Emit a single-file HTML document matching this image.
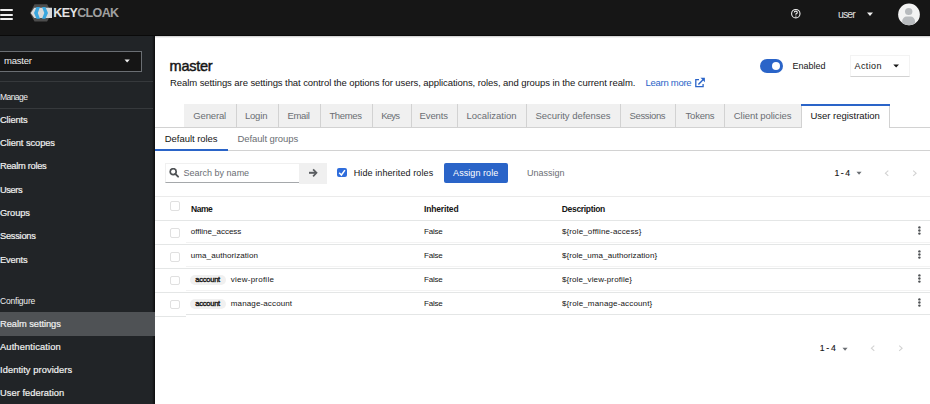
<!DOCTYPE html>
<html><head><meta charset="utf-8"><style>
html,body{margin:0;padding:0;width:930px;height:404px;overflow:hidden;background:#fff;}
body{position:relative;font-family:"Liberation Sans",sans-serif;}
.t{position:absolute;white-space:pre;line-height:1;}
.a{position:absolute;}
</style></head><body>
<!-- header -->
<div class="a" style="left:0;top:0;width:930px;height:35px;background:#161616;"></div>
<div class="a" style="left:0;top:35px;width:930px;height:1px;background:#0a0a0a;"></div>
<div class="a" style="left:155px;top:36px;width:775px;height:1.5px;background:linear-gradient(#c8c8c8,#fff);"></div>
<!-- hamburger -->
<div class="a" style="left:0;top:9px;width:13px;height:2px;background:#f0f0f0;border-radius:1px;"></div>
<div class="a" style="left:0;top:13.5px;width:13px;height:2px;background:#f0f0f0;border-radius:1px;"></div>
<div class="a" style="left:0;top:18px;width:13px;height:2px;background:#f0f0f0;border-radius:1px;"></div>
<!-- logo -->
<svg class="a" style="left:28px;top:2px;" width="100" height="24" viewBox="0 0 100 24">
  <polygon points="6.5,2.2 19.1,2.2 23.8,11 19.1,19.6 6.5,19.6 2,11" fill="#4d4d4d"/>
  <polygon points="2.7,11 6.2,5.8 24,5.8 24,16 6.2,16" fill="#d9d9d9"/>
  <polygon points="8.5,4.9 12,4.9 9.8,11 12,16.7 8.5,16.7 6,11" fill="#3aa6de"/>
  <polygon points="14,4.9 17.4,4.9 20,11 17.4,16.7 14,16.7 16.3,11" fill="#3aa6de"/>
  <text x="25.3" y="15.3" font-family="Liberation Sans" font-weight="bold" font-size="12.5" letter-spacing="-0.62"><tspan fill="#e4e4e4">KEY</tspan><tspan fill="#a0a0a0">CLOAK</tspan></text>
</svg>
<!-- help icon -->
<svg class="a" style="left:789px;top:7px;" width="14" height="14" viewBox="0 0 14 14">
  <circle cx="6.8" cy="6.7" r="4.2" fill="none" stroke="#f0f0f0" stroke-width="1.1"/>
  <path d="M5.3,5.5 Q5.3,4.1 6.8,4.1 Q8.3,4.1 8.3,5.4 Q8.3,6.3 6.9,6.9 L6.9,7.7" fill="none" stroke="#f0f0f0" stroke-width="1.1"/>
  <circle cx="6.9" cy="9.1" r="0.65" fill="#f0f0f0"/>
</svg>
<!-- user caret -->
<svg class="a" style="left:866px;top:12px;" width="8" height="5" viewBox="0 0 8 5"><polygon points="1,0.5 7,0.5 4,4" fill="#f0f0f0"/></svg>
<!-- avatar -->
<svg class="a" style="left:897px;top:3px;" width="24" height="24" viewBox="0 0 24 24">
  <defs><clipPath id="av"><circle cx="12" cy="11.45" r="10.8"/></clipPath></defs>
  <circle cx="12" cy="11.45" r="10.85" fill="#f3f3f3"/>
  <g clip-path="url(#av)">
    <ellipse cx="11.7" cy="8.6" rx="3.7" ry="3.5" fill="#b8bbbe"/>
    <rect x="5.2" y="13.6" width="12.8" height="12" rx="4.5" fill="#b8bbbe"/>
  </g>
</svg>

<!-- sidebar -->
<div class="a" style="left:0;top:36px;width:155px;height:368px;background:#212427;"></div>
<div class="a" style="left:152px;top:36px;width:3px;height:368px;background:linear-gradient(90deg,#212427,#0c0c0d);"></div>
<div class="a" style="left:-1px;top:50.5px;width:141px;height:19.5px;background:#151515;border:1px solid #6a6e73;"></div>
<svg class="a" style="left:124px;top:59px;" width="7" height="4" viewBox="0 0 7 4"><polygon points="0.5,0.4 5.8,0.4 3.15,3.4" fill="#f0f0f0"/></svg>
<div class="a" style="left:0;top:81px;width:153px;height:1px;background:#36393c;"></div>
<div class="a" style="left:0;top:107.5px;width:153px;height:1px;background:#36393c;"></div>
<div class="a" style="left:0;top:312px;width:155px;height:24px;background:#4f5255;"></div>

<!-- main: toggle -->
<div class="a" style="left:759.5px;top:59px;width:23.5px;height:14px;border-radius:7px;background:#2a64c8;"></div>
<div class="a" style="left:771.8px;top:62px;width:8.2px;height:8.2px;border-radius:50%;background:#fff;"></div>
<!-- action -->
<div class="a" style="left:850px;top:55.3px;width:57.6px;height:19.3px;border:1px solid #f3f3f3;border-bottom:1px solid #d2d2d2;"></div>
<svg class="a" style="left:893px;top:63.5px;" width="7" height="4" viewBox="0 0 7 4"><polygon points="0.3,0.4 6,0.4 3.15,3.6" fill="#151515"/></svg>
<!-- external link icon -->
<svg class="a" style="left:694px;top:77px;" width="12" height="11" viewBox="0 0 12 11">
  <path d="M5,2.7 H1.8 V9.7 H9.1 V7" fill="none" stroke="#2a64c8" stroke-width="1.3"/>
  <path d="M4.4,7.4 L9,2.8" fill="none" stroke="#2a64c8" stroke-width="1.4"/>
  <polygon points="6.5,0.8 10.9,0.8 10.9,5.2" fill="#2a64c8"/>
</svg>

<!-- tabs -->
<div class="a" style="left:184px;top:104px;width:617px;height:23px;background:#f0f0f0;"></div>
<div class="a" style="left:155px;top:127px;width:775px;height:1px;background:#d2d2d2;"></div>
<div class="a" style="left:235.5px;top:104px;width:1px;height:23px;background:#d2d2d2;"></div>
<div class="a" style="left:277.5px;top:104px;width:1px;height:23px;background:#d2d2d2;"></div>
<div class="a" style="left:319.5px;top:104px;width:1px;height:23px;background:#d2d2d2;"></div>
<div class="a" style="left:371.5px;top:104px;width:1px;height:23px;background:#d2d2d2;"></div>
<div class="a" style="left:410.5px;top:104px;width:1px;height:23px;background:#d2d2d2;"></div>
<div class="a" style="left:457px;top:104px;width:1px;height:23px;background:#d2d2d2;"></div>
<div class="a" style="left:526px;top:104px;width:1px;height:23px;background:#d2d2d2;"></div>
<div class="a" style="left:620.3px;top:104px;width:1px;height:23px;background:#d2d2d2;"></div>
<div class="a" style="left:675.3px;top:104px;width:1px;height:23px;background:#d2d2d2;"></div>
<div class="a" style="left:723.5px;top:104px;width:1px;height:23px;background:#d2d2d2;"></div>
<div class="a" style="left:800.5px;top:104px;width:89px;height:24px;background:#fff;border-left:1px solid #d2d2d2;border-right:1px solid #d2d2d2;box-sizing:border-box;"></div>
<div class="a" style="left:801px;top:104px;width:88.5px;height:2px;background:#2a64c8;"></div>
<!-- subtabs -->
<div class="a" style="left:155px;top:150px;width:775px;height:1px;background:#d2d2d2;"></div>
<div class="a" style="left:155px;top:149px;width:72.5px;height:2px;background:#2a64c8;"></div>

<!-- toolbar -->
<div class="a" style="left:164.7px;top:163.3px;width:134.3px;height:20px;border-top:1px solid #f0f0f0;border-left:1px solid #f0f0f0;border-bottom:1px solid #a5a8ab;box-sizing:border-box;"></div>
<svg class="a" style="left:169px;top:168px;" width="11" height="11" viewBox="0 0 11 11">
  <circle cx="4.2" cy="3.7" r="3.0" fill="none" stroke="#4f5255" stroke-width="1.7"/>
  <path d="M6.3,5.9 L9.1,8.7" stroke="#4f5255" stroke-width="1.9" stroke-linecap="round"/>
</svg>
<div class="a" style="left:299px;top:163.3px;width:28px;height:20.5px;background:#f0f0f0;"></div>
<svg class="a" style="left:308px;top:168px;" width="11" height="10" viewBox="0 0 11 10">
  <path d="M1,4.8 H8" fill="none" stroke="#5a5d61" stroke-width="2"/><path d="M5.1,1.3 L8.5,4.8 L5.1,8.3" fill="none" stroke="#5a5d61" stroke-width="1.7"/>
</svg>
<div class="a" style="left:337.2px;top:167.8px;width:9.6px;height:9.1px;border-radius:2px;background:#2f6ddc;"></div>
<svg class="a" style="left:337px;top:168px;" width="10" height="10" viewBox="0 0 10 10"><path d="M2.2,4.8 L4.4,7 L7.9,2.1" fill="none" stroke="#fff" stroke-width="1.5"/></svg>
<div class="a" style="left:444px;top:163px;width:64px;height:20.2px;border-radius:2px;background:#2a64c8;"></div>
<!-- pagination top -->
<svg class="a" style="left:856px;top:171px;" width="7" height="5" viewBox="0 0 7 5"><polygon points="0.5,0.8 5.6,0.8 3.05,3.8" fill="#6a6e73"/></svg>
<svg class="a" style="left:884px;top:170px;" width="6" height="7" viewBox="0 0 6 7"><path d="M4.3,0.6 L1.4,3.2 L4.3,5.8" fill="none" stroke="#d2d2d2" stroke-width="1.1"/></svg>
<svg class="a" style="left:912px;top:170px;" width="6" height="7" viewBox="0 0 6 7"><path d="M1.2,0.6 L4.1,3.2 L1.2,5.8" fill="none" stroke="#d2d2d2" stroke-width="1.1"/></svg>
<!-- pagination bottom -->
<svg class="a" style="left:842px;top:346.5px;" width="7" height="5" viewBox="0 0 7 5"><polygon points="0.5,0.8 5.6,0.8 3.05,3.8" fill="#6a6e73"/></svg>
<svg class="a" style="left:870px;top:345px;" width="6" height="7" viewBox="0 0 6 7"><path d="M4.3,0.6 L1.4,3.2 L4.3,5.8" fill="none" stroke="#d2d2d2" stroke-width="1.1"/></svg>
<svg class="a" style="left:898px;top:345px;" width="6" height="7" viewBox="0 0 6 7"><path d="M1.2,0.6 L4.1,3.2 L1.2,5.8" fill="none" stroke="#d2d2d2" stroke-width="1.1"/></svg>

<!-- table -->
<div class="a" style="left:155px;top:195.5px;width:775px;height:1.5px;background:#ebebeb;"></div>
<div class="a" style="left:170px;top:201px;width:9.5px;height:9.5px;border:1px solid #e0e0e0;border-radius:2px;box-sizing:border-box;"></div>
<div class="a" style="left:155px;top:220px;width:775px;height:1px;background:#e4e6e6;"></div>
<!-- row lines -->
<div class="a" style="left:186px;top:242px;width:744px;height:1px;background:#f3f3f3;"></div>
<div class="a" style="left:155px;top:244px;width:775px;height:1px;background:#e4e6e6;"></div>
<div class="a" style="left:186px;top:266px;width:744px;height:1px;background:#f3f3f3;"></div>
<div class="a" style="left:155px;top:268px;width:775px;height:1px;background:#e4e6e6;"></div>
<div class="a" style="left:186px;top:290px;width:744px;height:1px;background:#f3f3f3;"></div>
<div class="a" style="left:155px;top:292px;width:775px;height:1px;background:#e4e6e6;"></div>
<div class="a" style="left:186px;top:314px;width:744px;height:1px;background:#e4e6e6;"></div>
<div class="a" style="left:155px;top:316px;width:31px;height:1px;background:#e4e6e6;"></div>
<!-- row checkboxes -->
<div class="a" style="left:170px;top:228px;width:9.5px;height:9.5px;border:1px solid #e0e0e0;border-radius:2px;box-sizing:border-box;"></div>
<div class="a" style="left:170px;top:252px;width:9.5px;height:9.5px;border:1px solid #e0e0e0;border-radius:2px;box-sizing:border-box;"></div>
<div class="a" style="left:170px;top:275.5px;width:9.5px;height:9.5px;border:1px solid #e0e0e0;border-radius:2px;box-sizing:border-box;"></div>
<div class="a" style="left:170px;top:299.5px;width:9.5px;height:9.5px;border:1px solid #e0e0e0;border-radius:2px;box-sizing:border-box;"></div>
<!-- labels -->
<div class="a" style="left:190.4px;top:274.7px;width:35.6px;height:10px;border-radius:5px;background:#f0f0f0;"></div>
<div class="a" style="left:190.4px;top:298.6px;width:35.6px;height:10px;border-radius:5px;background:#f0f0f0;"></div>
<!-- kebabs -->
<svg class="a" style="left:917px;top:225.5px;" width="5" height="10" viewBox="0 0 5 10"><circle cx="2.4" cy="1.4" r="1.2" fill="#4f5255"/><circle cx="2.4" cy="4.5" r="1.2" fill="#4f5255"/><circle cx="2.4" cy="7.6" r="1.2" fill="#4f5255"/></svg>
<svg class="a" style="left:917px;top:249.5px;" width="5" height="10" viewBox="0 0 5 10"><circle cx="2.4" cy="1.4" r="1.2" fill="#4f5255"/><circle cx="2.4" cy="4.5" r="1.2" fill="#4f5255"/><circle cx="2.4" cy="7.6" r="1.2" fill="#4f5255"/></svg>
<svg class="a" style="left:917px;top:273.5px;" width="5" height="10" viewBox="0 0 5 10"><circle cx="2.4" cy="1.4" r="1.2" fill="#4f5255"/><circle cx="2.4" cy="4.5" r="1.2" fill="#4f5255"/><circle cx="2.4" cy="7.6" r="1.2" fill="#4f5255"/></svg>
<svg class="a" style="left:917px;top:297.5px;" width="5" height="10" viewBox="0 0 5 10"><circle cx="2.4" cy="1.4" r="1.2" fill="#4f5255"/><circle cx="2.4" cy="4.5" r="1.2" fill="#4f5255"/><circle cx="2.4" cy="7.6" r="1.2" fill="#4f5255"/></svg>

<span class="t" style="left:838.00px;top:9px;font-size:10.5px;color:#e0e0e0;letter-spacing:-0.867px;">user</span>
<span class="t" style="left:4.10px;top:56px;font-size:9.5px;color:#f0f0f0;letter-spacing:-0.240px;">master</span>
<span class="t" style="left:0.00px;top:93px;font-size:8.5px;color:#f0f0f0;letter-spacing:-0.560px;">Manage</span>
<span class="t" style="left:0.00px;top:116px;font-size:9.3px;color:#f0f0f0;letter-spacing:-0.117px;-webkit-text-stroke:0.2px #f0f0f0;">Clients</span>
<span class="t" style="left:0.00px;top:139px;font-size:9.3px;color:#f0f0f0;letter-spacing:-0.067px;-webkit-text-stroke:0.2px #f0f0f0;">Client scopes</span>
<span class="t" style="left:0.00px;top:162px;font-size:9.3px;color:#f0f0f0;letter-spacing:-0.290px;-webkit-text-stroke:0.2px #f0f0f0;">Realm roles</span>
<span class="t" style="left:0.00px;top:186px;font-size:9.3px;color:#f0f0f0;letter-spacing:-0.400px;-webkit-text-stroke:0.2px #f0f0f0;">Users</span>
<span class="t" style="left:0.00px;top:209px;font-size:9.3px;color:#f0f0f0;letter-spacing:-0.120px;-webkit-text-stroke:0.2px #f0f0f0;">Groups</span>
<span class="t" style="left:0.00px;top:232px;font-size:9.3px;color:#f0f0f0;letter-spacing:-0.271px;-webkit-text-stroke:0.2px #f0f0f0;">Sessions</span>
<span class="t" style="left:0.00px;top:256px;font-size:9.3px;color:#f0f0f0;letter-spacing:-0.160px;-webkit-text-stroke:0.2px #f0f0f0;">Events</span>
<span class="t" style="left:0.00px;top:297px;font-size:8.5px;color:#f0f0f0;letter-spacing:-0.200px;">Configure</span>
<span class="t" style="left:0.00px;top:320px;font-size:9.3px;color:#f0f0f0;letter-spacing:-0.046px;-webkit-text-stroke:0.2px #f0f0f0;">Realm settings</span>
<span class="t" style="left:0.00px;top:343px;font-size:9.3px;color:#f0f0f0;letter-spacing:0.138px;-webkit-text-stroke:0.2px #f0f0f0;">Authentication</span>
<span class="t" style="left:0.00px;top:366px;font-size:9.3px;color:#f0f0f0;letter-spacing:0.076px;-webkit-text-stroke:0.2px #f0f0f0;">Identity providers</span>
<span class="t" style="left:0.00px;top:389px;font-size:9.3px;color:#f0f0f0;letter-spacing:0.043px;-webkit-text-stroke:0.2px #f0f0f0;">User federation</span>
<span class="t" style="left:169.60px;top:59px;font-size:14.5px;color:#151515;letter-spacing:-0.260px;-webkit-text-stroke:0.45px #151515;">master</span>
<span class="t" style="left:170.00px;top:78px;font-size:9.5px;color:#151515;letter-spacing:-0.076px;">Realm settings are settings that control the options for users, applications, roles, and groups in the current realm.</span>
<span class="t" style="left:645.50px;top:78px;font-size:9.5px;color:#2a64c8;letter-spacing:-0.278px;">Learn more</span>
<span class="t" style="left:792.60px;top:62px;font-size:9px;color:#151515;letter-spacing:-0.017px;">Enabled</span>
<span class="t" style="left:854.60px;top:62px;font-size:9px;color:#151515;letter-spacing:0.360px;">Action</span>
<span class="t" style="left:193.30px;top:111px;font-size:9.5px;color:#6a6e73;letter-spacing:-0.150px;">General</span>
<span class="t" style="left:244.90px;top:111px;font-size:9.5px;color:#6a6e73;letter-spacing:-0.175px;">Login</span>
<span class="t" style="left:287.50px;top:111px;font-size:9.5px;color:#6a6e73;letter-spacing:-0.375px;">Email</span>
<span class="t" style="left:329.40px;top:111px;font-size:9.5px;color:#6a6e73;letter-spacing:-0.340px;">Themes</span>
<span class="t" style="left:381.20px;top:111px;font-size:9.5px;color:#6a6e73;letter-spacing:-0.733px;">Keys</span>
<span class="t" style="left:419.50px;top:111px;font-size:9.5px;color:#6a6e73;letter-spacing:-0.100px;">Events</span>
<span class="t" style="left:466.50px;top:111px;font-size:9.5px;color:#6a6e73;letter-spacing:-0.009px;">Localization</span>
<span class="t" style="left:535.50px;top:111px;font-size:9.5px;color:#6a6e73;letter-spacing:-0.031px;">Security defenses</span>
<span class="t" style="left:629.60px;top:111px;font-size:9.5px;color:#6a6e73;letter-spacing:-0.371px;">Sessions</span>
<span class="t" style="left:685.50px;top:111px;font-size:9.5px;color:#6a6e73;letter-spacing:-0.200px;">Tokens</span>
<span class="t" style="left:733.80px;top:111px;font-size:9.5px;color:#6a6e73;letter-spacing:-0.064px;">Client policies</span>
<span class="t" style="left:810.50px;top:111px;font-size:9.5px;color:#151515;letter-spacing:-0.025px;">User registration</span>
<span class="t" style="left:164.80px;top:134px;font-size:9.5px;color:#151515;letter-spacing:-0.050px;">Default roles</span>
<span class="t" style="left:237.40px;top:134px;font-size:9.5px;color:#6a6e73;letter-spacing:-0.077px;">Default groups</span>
<span class="t" style="left:183.60px;top:169px;font-size:9px;color:#6a6e73;">Search by name</span>
<span class="t" style="left:353.70px;top:169px;font-size:9px;color:#151515;letter-spacing:0.100px;">Hide inherited roles</span>
<span class="t" style="left:453.10px;top:169px;font-size:9px;color:#ffffff;letter-spacing:0.060px;">Assign role</span>
<span class="t" style="left:527.00px;top:169px;font-size:9px;color:#6a6e73;letter-spacing:0.014px;">Unassign</span>
<span class="t" style="left:834.40px;top:169px;font-size:8.7px;color:#151515;letter-spacing:-0.450px;-webkit-text-stroke:0.12px #151515;">1 - 4</span>
<span class="t" style="left:819.80px;top:344px;font-size:8.7px;color:#151515;letter-spacing:-0.350px;-webkit-text-stroke:0.12px #151515;">1 - 4</span>
<span class="t" style="left:191.00px;top:205px;font-size:8.5px;color:#151515;font-weight:bold;letter-spacing:-0.433px;">Name</span>
<span class="t" style="left:424.00px;top:205px;font-size:8.5px;color:#151515;font-weight:bold;letter-spacing:-0.163px;">Inherited</span>
<span class="t" style="left:561.80px;top:205px;font-size:8.5px;color:#151515;font-weight:bold;letter-spacing:-0.330px;">Description</span>
<span class="t" style="left:190.80px;top:228px;font-size:8px;color:#151515;">offline_access</span>
<span class="t" style="left:424.00px;top:228px;font-size:8px;color:#151515;letter-spacing:-0.225px;">False</span>
<span class="t" style="left:561.90px;top:228px;font-size:8px;color:#151515;letter-spacing:0.148px;">${role_offline-access}</span>
<span class="t" style="left:190.80px;top:252px;font-size:8px;color:#151515;letter-spacing:0.081px;">uma_authorization</span>
<span class="t" style="left:424.00px;top:252px;font-size:8px;color:#151515;letter-spacing:-0.225px;">False</span>
<span class="t" style="left:561.90px;top:252px;font-size:8px;color:#151515;letter-spacing:0.075px;">${role_uma_authorization}</span>
<span class="t" style="left:195.30px;top:276px;font-size:7.6px;color:#151515;letter-spacing:-0.283px;-webkit-text-stroke:0.35px #151515;">account</span>
<span class="t" style="left:230.80px;top:276px;font-size:8px;color:#151515;letter-spacing:0.236px;">view-profile</span>
<span class="t" style="left:424.00px;top:276px;font-size:8px;color:#151515;letter-spacing:-0.225px;">False</span>
<span class="t" style="left:561.90px;top:276px;font-size:8px;color:#151515;letter-spacing:0.111px;">${role_view-profile}</span>
<span class="t" style="left:195.30px;top:300px;font-size:7.6px;color:#151515;letter-spacing:-0.283px;-webkit-text-stroke:0.35px #151515;">account</span>
<span class="t" style="left:230.80px;top:300px;font-size:8px;color:#151515;letter-spacing:0.131px;">manage-account</span>
<span class="t" style="left:424.00px;top:300px;font-size:8px;color:#151515;letter-spacing:-0.225px;">False</span>
<span class="t" style="left:561.90px;top:300px;font-size:8px;color:#151515;letter-spacing:0.152px;">${role_manage-account}</span>
</body></html>
